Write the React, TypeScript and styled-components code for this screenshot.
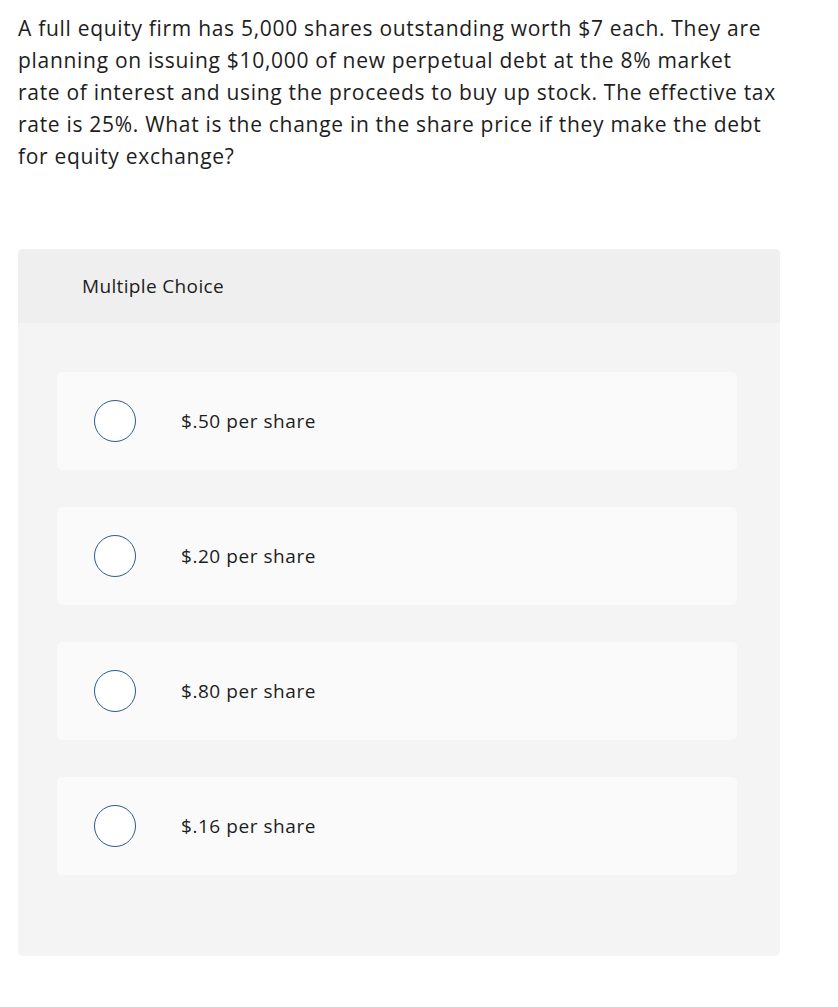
import React from 'react'
import styled, { createGlobalStyle } from 'styled-components'

const GlobalStyle = createGlobalStyle`
  body {
    margin: 0;
    background: #ffffff;
    font-family: 'Open Sans', 'Liberation Sans', sans-serif;
    color: #1d1d1d;
  }
`

const Page = styled.div`
  padding: 12px 0 0 18px;
`

const Question = styled.p`
  margin: 0;
  width: 800px;
  font-size: 21px;
  letter-spacing: 0.7px;
  line-height: 32px;
  color: #1d1d1d;
`

const Card = styled.div`
  margin-top: 77px;
  width: 762px;
  border-radius: 5px;
  overflow: hidden;
  background: #f4f4f4;
`

const Header = styled.div`
  height: 74px;
  display: flex;
  align-items: center;
  padding-left: 64px;
  background: #efefef;
  font-size: 19px;
  letter-spacing: 0.35px;
  color: #1d1d1d;
`

const Choices = styled.div`
  display: flex;
  flex-direction: column;
  gap: 37px;
  padding: 49px 43px 81px 39px;
`

const Choice = styled.label`
  height: 98px;
  display: flex;
  align-items: center;
  padding-left: 37px;
  background: #fafafa;
  border-radius: 5px;
  cursor: pointer;
`

const Radio = styled.span`
  width: 42px;
  height: 42px;
  box-sizing: border-box;
  border-radius: 50%;
  border: 1.5px solid #2c5b8c;
  background: #ffffff;
  flex-shrink: 0;
`

const ChoiceText = styled.span`
  margin-left: 45px;
  font-size: 19px;
  letter-spacing: 0.55px;
  color: #1d1d1d;
`

const options = ['$.50 per share', '$.20 per share', '$.80 per share', '$.16 per share']

export default function App() {
  return (
    <Page>
      <GlobalStyle />
      <Question>
        A full equity firm has 5,000 shares outstanding worth $7 each. They are
        <br />
        planning on issuing $10,000 of new perpetual debt at the 8% market
        <br />
        rate of interest and using the proceeds to buy up stock. The effective tax
        <br />
        rate is 25%. What is the change in the share price if they make the debt
        <br />
        for equity exchange?
      </Question>

      <Card>
        <Header>Multiple Choice</Header>
        <Choices>
          {options.map((option) => (
            <Choice key={option}>
              <Radio />
              <ChoiceText>{option}</ChoiceText>
            </Choice>
          ))}
        </Choices>
      </Card>
    </Page>
  )
}
